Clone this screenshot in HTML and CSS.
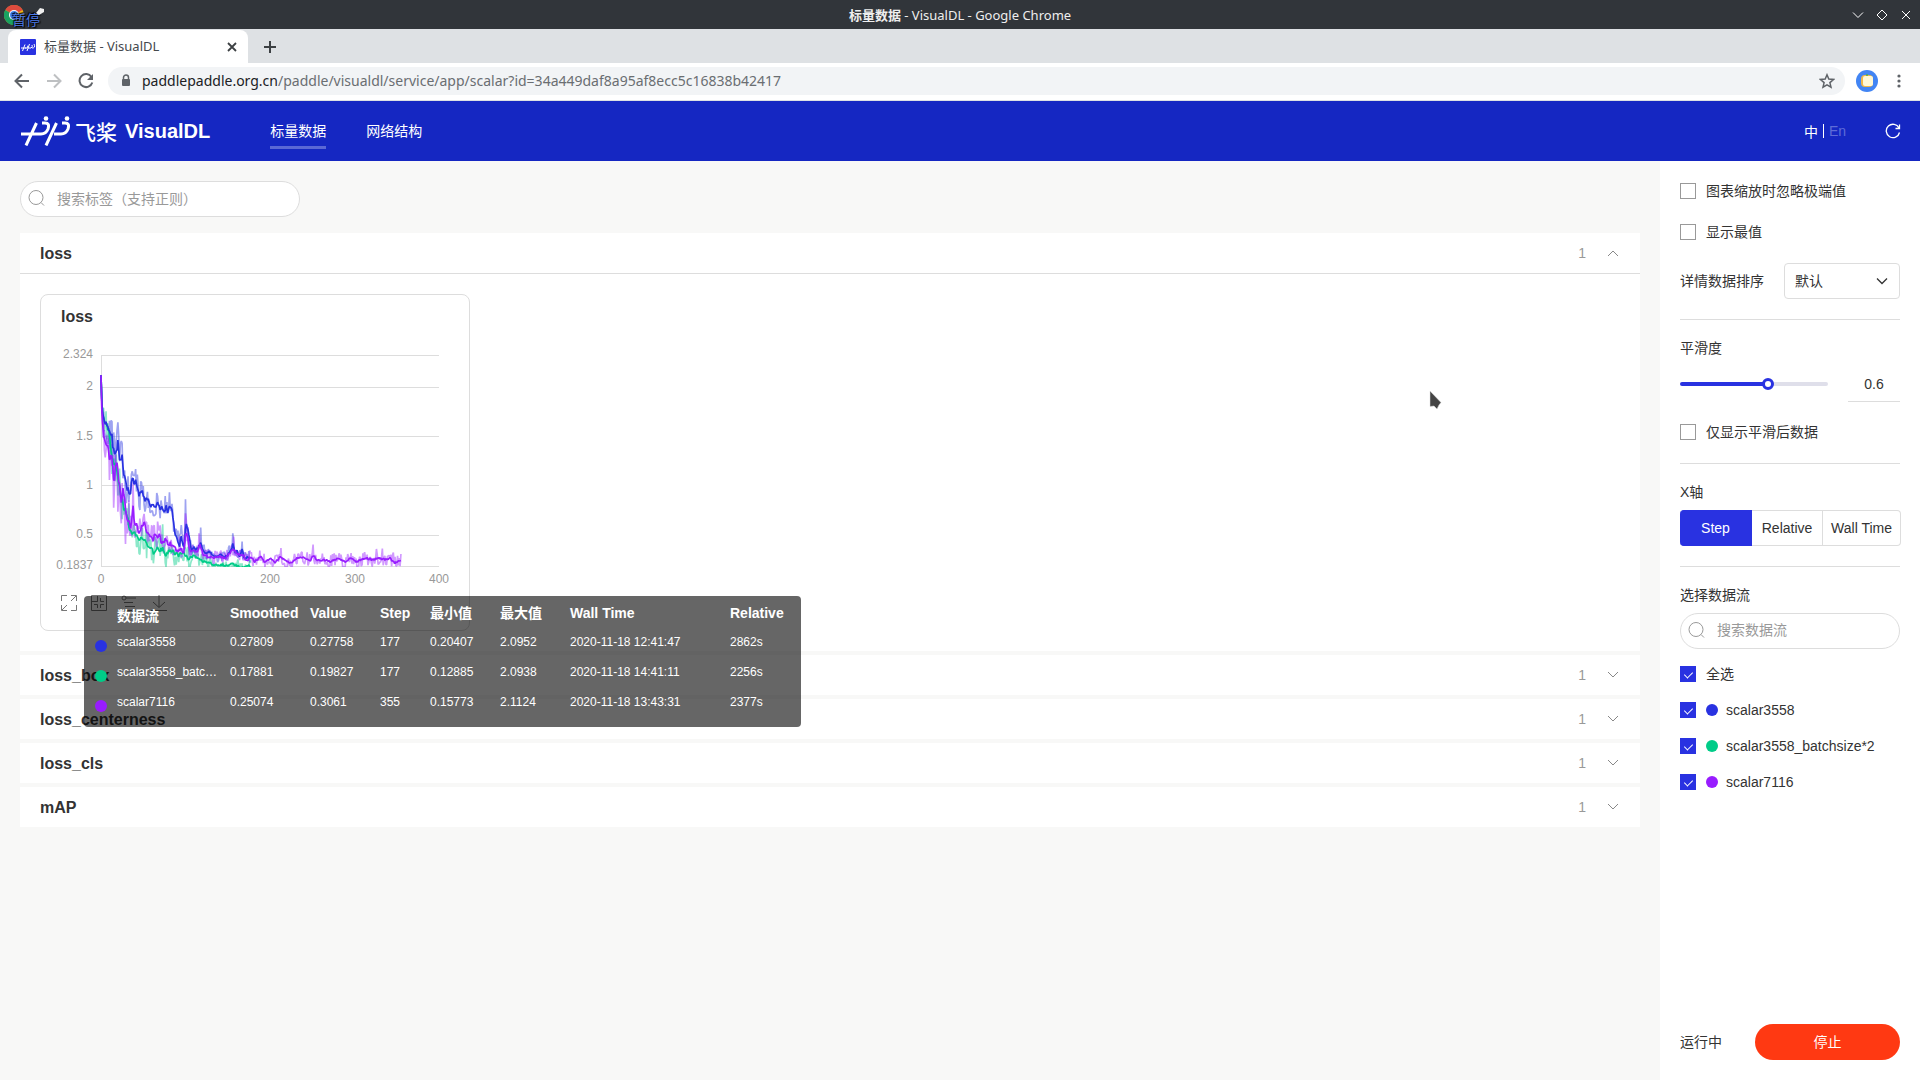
FILE: index.html
```html
<!DOCTYPE html>
<html lang="zh-CN">
<head>
  <meta charset="UTF-8">
  <title>标量数据 - VisualDL</title>
  <link rel="stylesheet" href="styles.css">
</head>
<body>
  <div class="titlebar">
    <svg class="chrome-icon" width="20" height="20" viewBox="0 0 20 20">
      <circle cx="10" cy="10" r="10" fill="#fbc116"/>
      <path d="M10 10L1.3 5A10 10 0 0 1 18.7 5z" fill="#dd4b3e"/>
      <path d="M10 10L1.3 5A10 10 0 0 0 10 20l4-8z" fill="#1aa260"/>
      <circle cx="10" cy="10" r="5" fill="#fff"/>
      <circle cx="10" cy="10" r="4" fill="#4688f4"/>
    </svg>
    <span class="paused">暂停</span>
    <svg class="pen" width="10" height="8" viewBox="0 0 10 8"><path d="M1 5L5 0l4 1v3L4 7z" fill="#eee"/></svg>
    <div class="window-title"><b>标量数据</b> - VisualDL - Google Chrome</div>
    <div class="window-buttons">
      <button aria-label="最小化"><svg width="12" height="12" viewBox="0 0 12 12"><path d="M1 3.500l5 5 5-5"/></svg></button>
      <button aria-label="最大化"><svg width="12" height="12" viewBox="0 0 12 12"><path d="M6 1l5 5-5 5-5-5z"/></svg></button>
      <button aria-label="关闭"><svg width="12" height="12" viewBox="0 0 12 12"><path d="M2 2l8 8M10 2l-8 8"/></svg></button>
    </div>
  </div>

  <div class="tabstrip">
    <div class="tab">
      <svg width="16" height="16" viewBox="0 0 16 16">
        <rect width="16" height="16" rx="1" fill="#2932e1"/>
        <path d="M1 9h5M5 5.500L2.500 12M7 7q2 0 0 2H5M9.500 5L7 12M8 9h3q2-1 1-3M14 5q2 4-2 4" fill="none" stroke="#fff"/>
      </svg>
      <span class="tab-name">标量数据 - VisualDL</span>
      <button aria-label="关闭标签页"><svg width="10" height="10" viewBox="0 0 10 10"><path d="M1 1l8 8M9 1L1 9" stroke="#3c4043" stroke-width="1.8"/></svg></button>
    </div>
    <button class="new-tab" aria-label="新标签页"><svg width="12" height="12" viewBox="0 0 12 12"><path d="M6 0v12M0 6h12" stroke="#3c4043" stroke-width="2"/></svg></button>
  </div>

  <div class="toolbar">
    <button aria-label="后退"><svg width="16" height="16" viewBox="0 0 16 16"><path d="M15 8H2M8 1.500L1.500 8 8 14.500"/></svg></button>
    <button class="off" aria-label="前进"><svg width="16" height="16" viewBox="0 0 16 16"><path d="M1 8h13M8 1.500L14.500 8 8 14.500"/></svg></button>
    <button aria-label="刷新"><svg width="16" height="16" viewBox="0 0 16 16"><path d="M13.500 4A6.500 6.500 0 1 0 14.300 9.500"/><path d="M15 1v6H9z" fill="#5f6368" stroke="none"/></svg></button>
    <div class="address">
      <svg width="10" height="14" viewBox="0 0 10 14"><path d="M2.500 6V3.500a2.500 2.500 0 0 1 5 0V6" fill="none" stroke="#5f6368" stroke-width="1.500"/><rect x="1" y="5" width="8" height="7" rx="1" fill="#5f6368"/></svg>
      <span class="url"><b>paddlepaddle.org.cn</b>/paddle/visualdl/service/app/scalar?id=34a449daf8a95af8ecc5c16838b42417</span>
      <button aria-label="收藏"><svg width="16" height="16" viewBox="0 0 16 16"><path d="M8 1.800l1.800 4.300 4.700.4-3.600 3.100 1.100 4.600L8 11.800l-4 2.400 1.100-4.600L1.500 6.500l4.700-.4z" stroke-width="1.500"/></svg></button>
    </div>
    <svg class="avatar" width="22" height="22" viewBox="0 0 22 22"><circle cx="11" cy="11" r="11" fill="#4285f4"/><rect x="5" y="5" width="12" height="12" rx="4" fill="#f0b849"/><rect x="7" y="6" width="10" height="10" rx="2" fill="#fff8d6"/><circle cx="11" cy="5" r="1" fill="#4caf50"/></svg>
    <button class="menu" aria-label="菜单"><svg width="4" height="14" viewBox="0 0 4 14"><g fill="#5f6368" stroke="none"><circle cx="2" cy="2" r="1.600"/><circle cx="2" cy="7" r="1.600"/><circle cx="2" cy="12" r="1.600"/></g></svg></button>
  </div>

  <header class="navbar">
    <a class="logo" href="#">
      <svg width="50" height="30" viewBox="0 0 50 30" fill="none" stroke="#fff" stroke-width="3">
        <path d="M0 18h20q5 0 7-5 2-6-3-6h-3M15.500 7L5 29.500M35.500 7L25 29.500M33 18h7q5 0 7-5 2-6-3-6h-3"/>
        <circle cx="25" cy="2.500" r="2.300" fill="#fff" stroke="none"/>
        <circle cx="46" cy="2.500" r="2.300" fill="#fff" stroke="none"/>
      </svg>
      <span class="logo-cn">飞桨</span>
      <span class="logo-en">VisualDL</span>
    </a>
    <nav>
      <a class="active" href="#">标量数据</a>
      <a href="#">网络结构</a>
    </nav>
    <div class="lang"><a href="#">中</a><i></i><a class="dim" href="#">En</a></div>
    <button class="reload" aria-label="刷新数据"><svg width="16" height="16" viewBox="0 0 16 16"><path d="M14 5A6.700 6.700 0 1 0 14.500 9.500M14.500 1.500V5.500H10.500" fill="none" stroke="#fff" stroke-width="1.300"/></svg></button>
  </header>

  <div class="page">
    <main>
      <label class="search search-tags">
        <svg width="17" height="17" viewBox="0 0 17 17"><circle cx="8" cy="7.500" r="7"/><path d="M13 12.500l3 3"/></svg>
        <input type="text" placeholder="搜索标签（支持正则）" aria-label="搜索标签">
      </label>

      <section class="panel open">
        <button class="panel-head"><span class="name">loss</span><span class="count">1</span><svg width="14" height="14" viewBox="0 0 14 14"><path d="M2 10l5-5 5 5"/></svg></button>
        <div class="panel-body">
          <div class="card">
            <h3>loss</h3>
            <svg class="chart" viewBox="0 0 428 250">
              <g class="grid">
                <path d="M60 15.500H398M60 47.500H398M60 96.500H398M60 145.500H398M60 195.500H398M60 226.500H398M60.500 15V227"/>
              </g>
              <g class="ylabels">
                <text x="52" y="18">2.324</text>
                <text x="52" y="50">2</text>
                <text x="52" y="100">1.5</text>
                <text x="52" y="149">1</text>
                <text x="52" y="198">0.5</text>
                <text x="52" y="229">0.1837</text>
              </g>
              <g class="xlabels">
                <text x="60" y="243">0</text>
                <text x="145" y="243">100</text>
                <text x="229" y="243">200</text>
                <text x="314" y="243">300</text>
                <text x="398" y="243">400</text>
              </g>
              <clipPath id="plot"><rect x="180" y="40" width="1020" height="641"/></clipPath>
              <g transform="translate(-1 0) scale(.3333)"><g id="series" clip-path="url(#plot)"></g></g>
            </svg>
            <div class="tools">
              <button aria-label="全屏"><svg width="16" height="16" viewBox="0 0 16 16"><path d="M.5 6V.5H6M10 .5h5.500V6M15.500 10v5.500H10M6 15.500H.5V10M15 1l-5 5M1 15l5-5"/></svg></button>
              <button aria-label="还原"><svg width="16" height="16" viewBox="0 0 16 16"><path d="M.5.5h15v15H.5zM6.500 0v6.500H0M3 6.500h3.500M9.500 3v3.500H13M3 9.500h3.500V13M13 9.500H9.500V13"/></svg></button>
              <button aria-label="对数轴"><svg width="16" height="16" viewBox="0 0 16 16"><circle cx="3" cy="3" r="2"/><path d="M5 3h10M3 7.500h9M4 11.500h10M4 15.500h7"/></svg></button>
              <button aria-label="下载"><svg width="16" height="16" viewBox="0 0 16 16"><path d="M8 0v12M2 7l6 5.500L14 7M0 15.500h16"/></svg></button>
            </div>

            <div class="tooltip">
              <table>
                <colgroup><col class="w33"><col class="w113"><col class="w80"><col class="w70"><col class="w50"><col class="w70"><col class="w70"><col class="w160"><col></colgroup>
                <tr><th></th><th class="run">数据流</th><th>Smoothed</th><th>Value</th><th>Step</th><th>最小值</th><th>最大值</th><th>Wall Time</th><th>Relative</th></tr>
                <tr><td class="mark"><i class="dot blue"></i></td><td>scalar3558</td><td>0.27809</td><td>0.27758</td><td>177</td><td>0.20407</td><td>2.0952</td><td>2020-11-18 12:41:47</td><td>2862s</td></tr>
                <tr><td class="mark"><i class="dot green"></i></td><td>scalar3558_batc…</td><td>0.17881</td><td>0.19827</td><td>177</td><td>0.12885</td><td>2.0938</td><td>2020-11-18 14:41:11</td><td>2256s</td></tr>
                <tr><td class="mark"><i class="dot purple"></i></td><td>scalar7116</td><td>0.25074</td><td>0.3061</td><td>355</td><td>0.15773</td><td>2.1124</td><td>2020-11-18 13:43:31</td><td>2377s</td></tr>
              </table>
            </div>
          </div>
        </div>
      </section>

      <section class="panel">
        <button class="panel-head"><span class="name">loss_box</span><span class="count">1</span><svg width="14" height="14" viewBox="0 0 14 14"><path d="M2 4l5 5 5-5"/></svg></button>
      </section>
      <section class="panel">
        <button class="panel-head"><span class="name">loss_centerness</span><span class="count">1</span><svg width="14" height="14" viewBox="0 0 14 14"><path d="M2 4l5 5 5-5"/></svg></button>
      </section>
      <section class="panel">
        <button class="panel-head"><span class="name">loss_cls</span><span class="count">1</span><svg width="14" height="14" viewBox="0 0 14 14"><path d="M2 4l5 5 5-5"/></svg></button>
      </section>
      <section class="panel">
        <button class="panel-head"><span class="name">mAP</span><span class="count">1</span><svg width="14" height="14" viewBox="0 0 14 14"><path d="M2 4l5 5 5-5"/></svg></button>
      </section>
    </main>

    <aside>
      <div class="group first">
        <label class="check"><input type="checkbox">图表缩放时忽略极端值</label>
        <label class="check"><input type="checkbox">显示最值</label>
        <div class="row">
          <label for="sort">详情数据排序</label>
          <div class="select">
            <select id="sort"><option>默认</option></select>
            <svg width="12" height="12" viewBox="0 0 12 12"><path d="M1 3.500l5 5 5-5"/></svg>
          </div>
        </div>
      </div>
      <div class="group">
        <label class="caption" for="smooth">平滑度</label>
        <div class="row smooth">
          <input type="range" id="smooth" min="0" max="0.99" step="0.01" value="0.6">
          <input type="text" class="number" value="0.6" aria-label="平滑度">
        </div>
        <label class="check"><input type="checkbox">仅显示平滑后数据</label>
      </div>
      <div class="group">
        <div class="caption">X轴</div>
        <div class="segments">
          <button class="on">Step</button><button>Relative</button><button>Wall Time</button>
        </div>
      </div>
      <div class="group runs">
        <div class="caption">选择数据流</div>
        <label class="search">
          <svg width="17" height="17" viewBox="0 0 17 17"><circle cx="8" cy="7.500" r="7"/><path d="M13 12.500l3 3"/></svg>
          <input type="text" placeholder="搜索数据流" aria-label="搜索数据流">
        </label>
        <label class="check"><input type="checkbox" checked>全选</label>
        <label class="check"><input type="checkbox" checked><i class="dot blue"></i>scalar3558</label>
        <label class="check"><input type="checkbox" checked><i class="dot green"></i>scalar3558_batchsize*2</label>
        <label class="check"><input type="checkbox" checked><i class="dot purple"></i>scalar7116</label>
      </div>
      <div class="status">
        <span>运行中</span>
        <button>停止</button>
      </div>
    </aside>
  </div>

  <svg class="cursor" width="13" height="20" viewBox="0 0 13 20"><path d="M1 1v15.500l4-.5 3 3 2-4 2-2.500z" fill="#444" stroke="#ddd" stroke-width=".5"/></svg>

  <script src="chart.js"></script>
</body>
</html>
```
FILE: styles.css
```css
* {
  box-sizing: border-box;
}
body {
  margin: 0;
  height: 100vh;
  display: flex;
  flex-direction: column;
  overflow: hidden;
  font-family: "Liberation Sans", "Noto Sans CJK SC", sans-serif;
  font-size: 14px;
  color: #333;
  background: #f8f8f7;
}
button, input, select {
  font: inherit;
  color: inherit;
}
button {
  border: none;
  background: none;
  padding: 0;
}
svg {
  display: block;
  flex: none;
}
a {
  color: inherit;
  text-decoration: none;
}

/* browser window */
.titlebar {
  position: relative;
  display: flex;
  align-items: center;
  flex: none;
  height: 29px;
  padding: 0 8px 0 4px;
  background: #31353a;
  color: #eee;
  font: 13px "Noto Sans", "Noto Sans CJK SC", sans-serif;
}
.paused {
  position: absolute;
  left: 12px;
  top: 10px;
  font-size: 14px;
  line-height: 20px;
  color: #4d7be8;
  text-shadow: 0 0 2px #000, 1px 1px 1px #000, -1px -1px 1px #000;
}
.pen {
  position: absolute;
  left: 35px;
  top: 8px;
}
.window-title {
  flex: 1;
  padding-left: 44px;
  text-align: center;
}
.window-buttons {
  display: flex;
  gap: 12px;
}
.window-buttons svg {
  fill: none;
  stroke: #fff;
}
.tabstrip {
  display: flex;
  flex: none;
  height: 34px;
  padding: 1px 8px 0;
  background: #dee1e4;
  font: 13px "Noto Sans", "Noto Sans CJK SC", sans-serif;
}
.tab {
  display: flex;
  align-items: center;
  gap: 8px;
  width: 240px;
  padding: 0 11px 0 12px;
  background: #fff;
  border-radius: 8px 8px 0 0;
}
.tab-name {
  flex: 1;
  padding-bottom: 2px;
  color: #45494d;
}
.new-tab {
  margin-left: 16px;
}
.toolbar {
  display: flex;
  align-items: center;
  flex: none;
  gap: 16px;
  height: 38px;
  padding: 0 19px 2px 14px;
  background: #fff;
  border-bottom: 1px solid #dee1e4;
}
.toolbar button svg {
  fill: none;
  stroke: #5f6368;
  stroke-width: 2;
}
.toolbar .off {
  opacity: 0.4;
}
.address {
  flex: 1;
  display: flex;
  align-items: center;
  gap: 11px;
  height: 28px;
  margin-left: -2px;
  margin-right: -5px;
  padding: 0 10px 0 13px;
  border-radius: 14px;
  background: #f2f4f6;
  font: 14px "Noto Sans", sans-serif;
  color: #6a6e72;
}
.url {
  flex: 1;
}
.url b {
  font-weight: normal;
  color: #202124;
}
.menu {
  margin-left: 3px;
}

/* top navigation */
.navbar {
  display: flex;
  align-items: center;
  flex: none;
  height: 60px;
  padding: 0 19px 0 21px;
  background: #1527c2;
  color: #fff;
}
.logo {
  display: flex;
  align-items: center;
}
.logo-cn {
  margin: 0 8px 0 4px;
  font: 500 21px/30px "Noto Sans CJK SC", sans-serif;
}
.logo-en {
  font-size: 20px;
  font-weight: bold;
}
nav {
  flex: 1;
  display: flex;
  gap: 40px;
  margin-left: 60px;
}
nav a {
  padding: 8px 0 5px;
  line-height: 20px;
  border-bottom: 3px solid transparent;
}
nav a.active {
  border-color: #5b68d5;
}
.lang {
  display: flex;
  align-items: center;
  gap: 5px;
  margin-right: 39px;
}
.lang i {
  width: 1px;
  height: 14px;
  background: #fff;
}
.lang .dim {
  color: #5f6cd8;
}

.page {
  flex: 1;
  display: flex;
  min-height: 0;
}
main {
  flex: 1;
  padding: 20px;
}

.search {
  display: flex;
  align-items: center;
  gap: 12px;
  height: 36px;
  padding: 0 7px 1px;
  border: 1px solid #ddd;
  border-radius: 18px;
  background: #fff;
}
.search-tags {
  width: 280px;
  margin-bottom: 16px;
}
.search svg {
  fill: none;
  stroke: #999;
}
.search input {
  flex: 1;
  min-width: 0;
  border: none;
  padding: 0;
  background: none;
}
.search input::placeholder {
  color: #999;
}

.panel {
  margin-bottom: 4px;
  background: #fff;
}
.panel-head {
  display: flex;
  align-items: center;
  gap: 20px;
  width: 100%;
  height: 40px;
  padding: 0 20px;
  text-align: left;
}
.panel-head .name {
  flex: 1;
  padding-top: 2px;
  font-size: 16px;
  font-weight: bold;
}
.panel-head .count {
  color: #999;
}
.panel-head svg {
  fill: none;
  stroke: #888;
}
.panel-body {
  padding: 20px;
  border-top: 1px solid #ddd;
}
.card {
  position: relative;
  width: 430px;
  padding: 10px 0 19px;
  border: 1px solid #ddd;
  border-radius: 8px;
}
.card h3 {
  margin: 0 20px 11px;
  font-size: 16px;
  line-height: 24px;
}
.chart {
  width: 100%;
  font-size: 12px;
}
.chart text {
  fill: #999;
}
.grid path {
  stroke: #ddd;
}
.ylabels {
  text-anchor: end;
}
.xlabels {
  text-anchor: middle;
}
.tools {
  display: flex;
  gap: 14px;
  padding: 5px 20px 0;
}
.tools svg {
  fill: none;
  stroke: #777;
}

.tooltip {
  position: absolute;
  left: 43px;
  top: 301px;
  width: 717px;
  padding: 1px 0 10px;
  border-radius: 4px;
  background: rgba(0, 0, 0, 0.6);
  color: #fff;
}
.tooltip table {
  width: 100%;
  table-layout: fixed;
  border-collapse: collapse;
}
.tooltip th, .tooltip td {
  height: 30px;
  padding: 0;
  text-align: left;
  white-space: nowrap;
  line-height: 18px;
}
.tooltip th {
  padding-top: 2px;
}
.tooltip td {
  font-size: 12px;
}
.tooltip .run {
  padding-top: 8px;
}
.tooltip .mark {
  padding: 8px 0 0 11px;
}
.w33 { width: 33px; }
.w50 { width: 50px; }
.w70 { width: 70px; }
.w80 { width: 80px; }
.w113 { width: 113px; }
.w160 { width: 160px; }

.dot {
  display: block;
  width: 12px;
  height: 12px;
  border-radius: 50%;
}
.blue { background: #2932e1; }
.green { background: #00cc88; }
.purple { background: #981cff; }

/* settings on the right */
aside {
  display: flex;
  flex-direction: column;
  width: 260px;
  padding: 0 20px 20px;
  background: #fff;
  line-height: 21px;
}
.group {
  display: flex;
  flex-direction: column;
  padding: 18px 0 20px;
  border-top: 1px solid #ddd;
}
.group.first {
  gap: 20px;
  padding-top: 20px;
  border-top: none;
}
.group.runs {
  flex: 1;
  gap: 15px;
}
.runs .caption {
  margin-bottom: -8px;
}
.caption {
  margin-bottom: 7px;
}
.row {
  display: flex;
  align-items: center;
  justify-content: space-between;
}
.smooth {
  gap: 20px;
  margin-bottom: 20px;
}
.check {
  display: flex;
  align-items: center;
}
.check .dot {
  margin: 0 8px 2px 0;
}
input[type=checkbox] {
  appearance: none;
  position: relative;
  width: 16px;
  height: 16px;
  margin: 0 10px 1px 0;
  border: 1px solid #999;
  background: #fff;
}
input[type=checkbox]:checked {
  border-color: #2932e1;
  background: #2932e1;
}
input[type=checkbox]:checked::after {
  content: "";
  position: absolute;
  left: 5px;
  top: 3px;
  width: 4px;
  height: 7px;
  border: solid #fff;
  border-width: 0 1px 1px 0;
  transform: rotate(45deg);
}
.select {
  position: relative;
  width: 116px;
}
.select select {
  appearance: none;
  width: 100%;
  height: 36px;
  padding: 0 10px;
  border: 1px solid #ddd;
  border-radius: 4px;
  background: #fff;
}
.select svg {
  position: absolute;
  right: 12px;
  top: 12px;
  fill: none;
  stroke: #333;
  stroke-width: 1.3;
}
input[type=range] {
  appearance: none;
  flex: 1;
  min-width: 0;
  height: 12px;
  margin: 0;
  background: none;
}
input[type=range]::-webkit-slider-runnable-track {
  height: 4px;
  border-radius: 2px;
  background: linear-gradient(to right, #2932e1 60%, #dfdfea 60%);
}
input[type=range]::-webkit-slider-thumb {
  appearance: none;
  width: 12px;
  height: 12px;
  margin-top: -4px;
  border: 3px solid #2932e1;
  border-radius: 50%;
  background: #fff;
}
.number {
  width: 52px;
  height: 36px;
  padding: 0;
  border: none;
  border-bottom: 1px solid #ddd;
  text-align: center;
}
.segments {
  display: flex;
  margin-right: -1px;
}
.segments button {
  flex: 71;
  height: 36px;
  border: 1px solid #ddd;
  border-left: none;
}
.segments button.on {
  flex: 72;
  background: #2932e1;
  border-color: #2932e1;
  border-radius: 4px 0 0 4px;
  color: #fff;
}
.segments button:last-child {
  flex: 78;
  border-radius: 0 4px 4px 0;
}
.status {
  display: flex;
  align-items: center;
  justify-content: space-between;
}
.status button {
  width: 145px;
  height: 36px;
  border-radius: 18px;
  background: #ff3912;
  color: #fff;
}

.cursor {
  position: absolute;
  left: 1429px;
  top: 390px;
}
```
FILE: chart.js
```js
// smoothed curve, peaks of the raw curve, in thirds of a pixel
const runs = [
  {
    color: "#00cc88",
    line: "183,106 187,225 192,240 197,245 203,265 209,285 214,340 221,365 228,385 236,420 242,470 248,490 255,515 262,530 268,560 275,578 282,575 290,590 298,608 305,590 312,595 320,615 330,620 340,638 350,622 360,632 370,625 378,645 388,630 400,635 415,645 430,640 445,655 460,648 475,655 490,664 510,671 530,675 545,673 560,678 575,671 590,677 600,684 612,684 622,675 632,680",
    peaks: { 191: 203, 198: 214, 266: 490, 296: 640, 320: 655, 341: 670, 367: 553, 401: 658 }
  },
  {
    color: "#2932e1",
    line: "183,106 186,200 190,240 196,250 204,262 210,270 216,290 221,335 226,330 230,345 234,295 238,365 242,370 246,340 251,400 256,410 262,448 268,458 271,468 275,425 279,416 284,440 288,420 292,440 298,470 303,448 309,462 314,480 325,474 331,495 345,500 352,494 357,488 361,508 366,500 373,520 378,498 384,516 389,495 396,515 401,545 405,590 412,598 418,620 423,590 428,612 433,620 437,555 443,560 448,598 454,630 462,622 468,630 476,622 482,605 488,630 500,640 510,636 520,650 540,646 556,652 566,640 574,628 579,612 585,640 592,632 600,650 607,625 612,655 622,652 630,655",
    peaks: { 209: 242, 233: 247, 246: 310, 278: 394, 287: 387, 303: 424, 299: 510, 316: 515, 376: 468, 389: 457, 424: 555, 437: 478, 482: 563, 578: 580, 606: 605 }
  },
  {
    color: "#981cff",
    line: "183,106 186,230 190,275 195,300 200,310 205,335 209,375 214,345 218,370 222,430 227,375 232,370 237,425 242,460 245,490 248,432 252,465 257,510 263,540 268,548 273,570 279,492 284,560 290,555 296,585 303,565 312,550 320,572 330,592 340,598 346,578 352,600 358,585 366,612 375,598 385,612 395,612 405,628 414,640 422,620 432,640 438,575 444,600 452,635 462,630 470,640 480,615 490,645 505,650 520,652 540,650 555,655 570,640 580,625 590,640 600,645 610,645 620,665 630,650 645,665 660,650 675,665 690,655 705,668 723,650 740,666 755,668 775,652 795,655 810,662 820,648 835,662 850,658 870,665 900,655 915,668 930,652 950,665 980,655 1000,660 1015,655 1035,660 1050,655 1065,668 1084,658",
    peaks: { 193: 330, 209: 420, 221: 503, 234: 515, 243: 550, 257: 612, 262: 580, 279: 425, 310: 533, 354: 545, 437: 520, 477: 580, 580: 590, 659: 632, 723: 624, 787: 636, 819: 614, 898: 640, 1009: 627, 1027: 626, 1061: 638, 1084: 642 }
  }
];

let seed = 7;
function noise() {
  seed = (seed * 16807) % 2147483647;
  return seed / 2147483647 - 0.5;
}

function valueAt(points, x) {
  const i = points.findIndex(p => p[0] >= x);
  if (i < 1) return points[i < 0 ? points.length - 1 : 0][1];
  const [x0, y0] = points[i - 1];
  const [x1, y1] = points[i];
  return y0 + (y1 - y0) * (x - x0) / (x1 - x0);
}

function draw(points, color, width, opacity) {
  const el = document.createElementNS("http://www.w3.org/2000/svg", "polyline");
  el.setAttribute("points", points.map(p => p.join(",")).join(" "));
  el.setAttribute("fill", "none");
  el.setAttribute("stroke", color);
  el.setAttribute("stroke-width", width);
  el.setAttribute("stroke-linejoin", "bevel");
  el.setAttribute("opacity", opacity);
  document.getElementById("series").appendChild(el);
}

runs.forEach(run => {
  const key = run.line.split(" ").map(p => p.split(",").map(Number));
  const raw = [];
  const smooth = [];
  for (let x = 183; x <= key[key.length - 1][0]; x += 2.535) {
    const y = valueAt(key, x);
    const amp = x < 190 ? 0 : x < 270 ? 130 : x < 450 ? 80 : 42;
    const peak = Object.keys(run.peaks).find(p => Math.abs(p - x) <= 1.27);
    raw.push([x, peak ? run.peaks[peak] : y + noise() * amp]);
    smooth.push([x, y + noise() * amp / 6]);
  }
  run.raw = raw;
  run.smooth = smooth;
});
runs.forEach(run => draw(run.raw, run.color, 5, 0.45));
runs.forEach(run => draw(run.smooth, run.color, 5, 1));
```
